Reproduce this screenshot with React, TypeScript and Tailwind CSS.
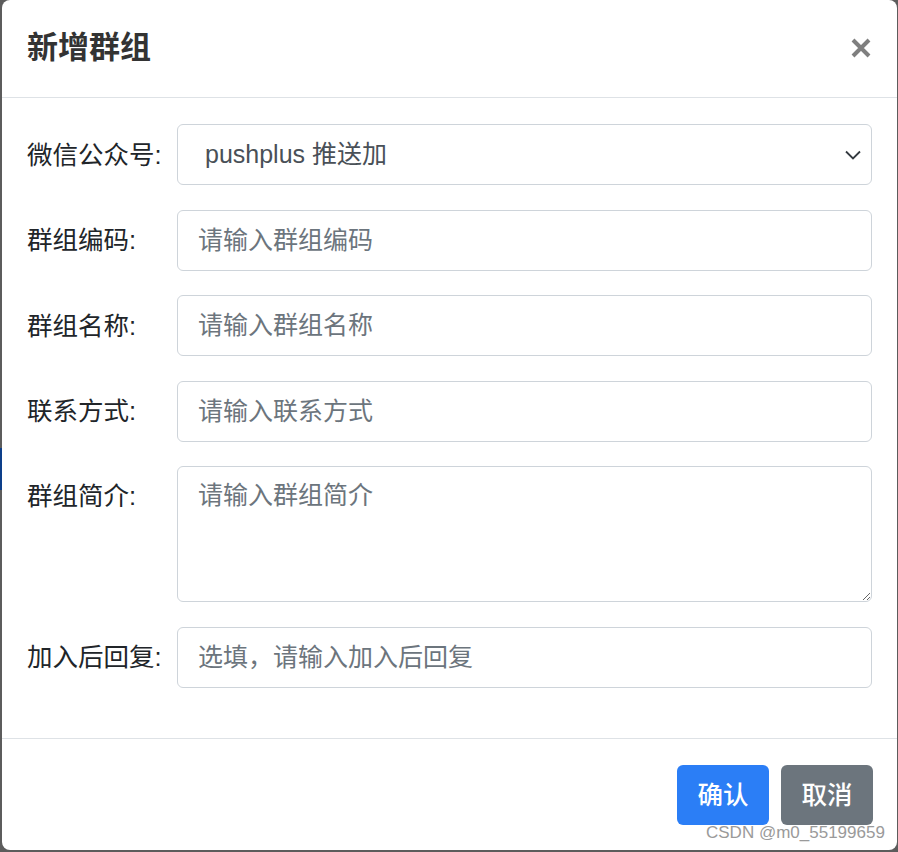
import React from "react";

const font = { fontFamily: '"Liberation Sans", "Noto Sans CJK SC", sans-serif' };

function Row({ label, children, top = false }: { label: string; children: React.ReactNode; top?: boolean }) {
  return (
    <div className={`flex ${top ? "items-start" : "items-center"} mb-[24.5px]`}>
      <label className={`w-[150px] shrink-0 text-[25.5px] leading-[36px] text-[#212529] ${top ? "pt-[12px]" : ""}`}>{label}</label>
      <div className="flex-1">{children}</div>
    </div>
  );
}

const inputCls =
  "w-full h-[61px] rounded-[6px] border border-[#ced4da] bg-white px-[20px] text-[25px] text-[#495057] outline-none placeholder:text-[#6c757d]";

export default function App() {
  return (
    <div className="w-[898px] h-[852px] bg-[#5c5c5c] relative overflow-hidden" style={font}>
      <div className="absolute left-[2px] top-0 w-[895px] h-[850px] bg-white rounded-[8px] flex flex-col">
        {/* Header */}
        <div className="h-[98px] flex items-center justify-between pl-[25px] pr-[26px] border-b border-[#dee2e6]">
          <h5 className="text-[31px] font-bold text-[#333] leading-none -mt-[2px]">新增群组</h5>
          <svg width="20" height="20" viewBox="0 0 20 20" className="-mt-[2px]">
            <path d="M2 2 L18 18 M18 2 L2 18" stroke="#7f7f7f" strokeWidth="4" strokeLinecap="butt" />
          </svg>
        </div>
        {/* Body */}
        <div className="px-[25px] pt-[26px] flex-1">
          <Row label="微信公众号:">
            <div className={`${inputCls} flex items-center justify-between pl-[27px] pr-[10px]`}>
              <span>pushplus 推送加</span>
              <svg width="16" height="10" viewBox="0 0 16 10">
                <path d="M1 1.5 L8 8.5 L15 1.5" fill="none" stroke="#343a40" strokeWidth="1.8" />
              </svg>
            </div>
          </Row>
          <Row label="群组编码:">
            <input className={inputCls} placeholder="请输入群组编码" />
          </Row>
          <Row label="群组名称:">
            <input className={inputCls} placeholder="请输入群组名称" />
          </Row>
          <Row label="联系方式:">
            <input className={inputCls} placeholder="请输入联系方式" />
          </Row>
          <Row label="群组简介:" top>
            <textarea
              className="block w-full h-[136px] rounded-[6px] border border-[#ced4da] bg-white px-[20px] pt-[10px] text-[25px] leading-[36px] text-[#495057] outline-none resize-y placeholder:text-[#6c757d]"
              placeholder="请输入群组简介"
            />
          </Row>
          <Row label="加入后回复:">
            <input className={inputCls} placeholder="选填，请输入加入后回复" />
          </Row>
        </div>
        {/* Footer */}
        <div className="h-[112px] border-t border-[#dee2e6] flex items-start justify-end gap-[12px] pr-[24px] pt-[26px]">
          <button className="w-[92px] h-[60px] rounded-[6px] bg-[#2b7ef6] text-white text-[25.5px] font-medium">确认</button>
          <button className="w-[92px] h-[60px] rounded-[6px] bg-[#6c757d] text-white text-[25.5px] font-medium">取消</button>
        </div>
      </div>
      <div className="absolute left-0 top-[448px] w-[2px] h-[42px] bg-[#0d3f8a]" />
      <div className="absolute left-[706px] top-[822px] text-[17px] leading-[22px] text-[#9a9a9a]" style={{ fontFamily: '"Liberation Sans", sans-serif' }}>
        CSDN @m0_55199659
      </div>
    </div>
  );
}
